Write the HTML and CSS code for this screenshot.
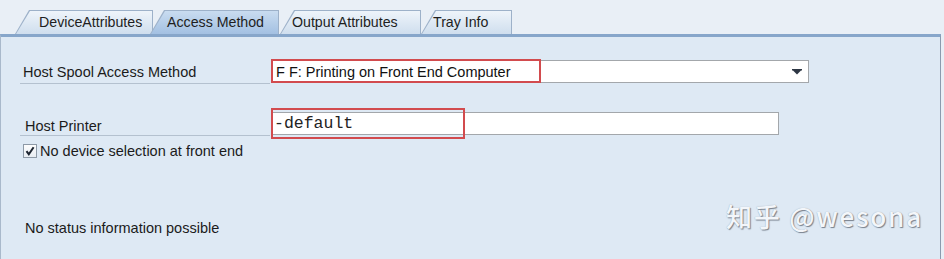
FILE: index.html
```html
<!DOCTYPE html>
<html lang="en">
<head>
  <meta charset="UTF-8">
  <title>Output Device - Access Method</title>
  <link rel="stylesheet" href="styles.css">
</head>
<body>
  <div class="tabs">
    <div class="tab tab-device">DeviceAttributes</div>
    <div class="tab tab-access active">Access Method</div>
    <div class="tab tab-output">Output Attributes</div>
    <div class="tab tab-tray">Tray Info</div>
  </div>

  <div class="panel">
    <div class="row row-method">
      <div class="label">Host Spool Access Method</div>
      <div class="field field-method">
        <span class="value">F F: Printing on Front End Computer</span>
        <svg class="arrow" width="10" height="6" viewBox="0 0 10 6"><path d="M0 0h10v1.5H0z M1 1.5h8L5 5.5z" fill="#2d3644"/></svg>
        <div class="mark mark-method"></div>
      </div>
    </div>

    <div class="row row-printer">
      <div class="label label-printer">Host Printer</div>
      <div class="field field-printer">
        <span class="value mono">-default</span>
        <div class="mark mark-printer"></div>
      </div>
    </div>

    <label class="check">
      <span class="box">
        <svg width="12" height="12" viewBox="0 0 12 12"><path d="M2.5 6.2l2.3 3 4.8-7" fill="none" stroke="#1d2530" stroke-width="2"/></svg>
      </span>
      No device selection at front end
    </label>

    <div class="status">No status information possible</div>

    <div class="watermark">知乎 @wesona</div>
  </div>
</body>
</html>
```

FILE: styles.css
```css
body {
  margin: 0;
  width: 944px;
  height: 259px;
  overflow: hidden;
  background-color: #e9eff6;
  font-family: "Liberation Sans", Arial, sans-serif;
  font-size: 14.5px;
  color: #1b1b1b;
}

/* tab strip */
.tabs {
  display: flex;
  align-items: flex-end;
  height: 34px;
  padding-left: 15px;
  box-sizing: border-box;
}
.tab {
  position: relative;
  height: 24px;
  line-height: 25px;
  font-size: 14.2px;
  color: #1e1e1e;
  box-sizing: border-box;
  z-index: 1;
}
.tab::before,
.tab::after {
  content: "";
  position: absolute;
  z-index: -1;
}
.tab::before {
  inset: 0;
  background: #9db1c9;
  clip-path: polygon(0 100%, 14px 0, 100% 0, 100% 100%);
}
.tab::after {
  inset: 1px 1px 0 1px;
  background: linear-gradient(#eef4fa, #cfdeee);
  clip-path: polygon(0 100%, 14px 0, 100% 0, 100% 100%);
}
.tab.active {
  z-index: 2;
}
.tab.active::after {
  background: linear-gradient(#c9dcf0, #a3c0e2);
}
.tab-device { width: 138px; padding-left: 24px; }
.tab-access { width: 129px; padding-left: 17px; margin-left: -3px; }
.tab-output { width: 141px; padding-left: 12px; margin-left: 1px; }
.tab-tray { width: 91px; padding-left: 12px; }

/* content panel */
.panel {
  position: relative;
  width: 941px;
  height: 225px;
  box-sizing: border-box;
  border-top: 3px solid #87a6ca;
  border-left: 1px solid #a9b9cb;
  border-right: 1px solid #8b9bae;
  background-color: #dee9f4;
  padding: 23px 0 0 19px;
}
.row {
  display: flex;
  align-items: stretch;
  height: 24px;
}
.row-printer {
  margin-top: 28px;
}
.label {
  width: 250px;
  padding-left: 3px;
  box-sizing: border-box;
  border-bottom: 1px solid #b4c1cf;
  line-height: 25px;
}
.label-printer {
  padding-left: 5px;
  line-height: 28px;
}
.field {
  position: relative;
  margin-left: 2px;
  height: 23px;
  box-sizing: border-box;
  border: 1px solid #a3a7ab;
  background: #fff;
  display: flex;
  align-items: center;
}
.field-method { width: 537px; }
.field-printer { width: 507px; }
.value {
  padding-left: 3px;
  color: #111;
}
.mono {
  padding-left: 1px;
  font-family: "Liberation Mono", "Courier New", monospace;
  font-size: 16.5px;
  color: #222;
}
.arrow {
  margin-left: auto;
  margin-right: 6px;
}

/* red annotation frames */
.mark {
  position: absolute;
  border: 2px solid #d24b4e;
  box-sizing: border-box;
}
.mark-method {
  left: -2px;
  top: -2px;
  width: 270px;
  height: 24px;
}
.mark-printer {
  left: -2px;
  top: -5px;
  width: 194px;
  height: 31px;
}

.check {
  display: flex;
  align-items: center;
  gap: 3px;
  margin-top: 7px;
  margin-left: 3px;
  height: 15px;
}
.box {
  width: 14px;
  height: 14px;
  box-sizing: border-box;
  border: 1px solid #8d99a6;
  background: linear-gradient(#fdfdfd, #e8edf2);
  display: flex;
  align-items: center;
  justify-content: center;
}

.status {
  margin-top: 62px;
  margin-left: 5px;
}

.watermark {
  position: absolute;
  left: 725px;
  top: 160px;
  font-family: "Noto Sans CJK SC", "Noto Sans", sans-serif;
  font-size: 26px;
  font-weight: 500;
  color: #f3f6fa;
  text-shadow: 1px 1px 1px #78818d, 0 0 1px #9aa3ad;
  letter-spacing: 1.8px;
}
```
